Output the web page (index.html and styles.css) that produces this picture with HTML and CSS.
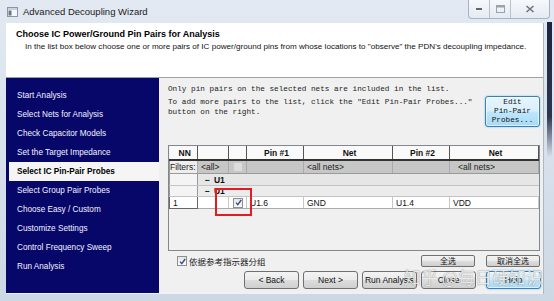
FILE: index.html
```html
<!DOCTYPE html>
<html lang="en">
<head>
    <meta charset="UTF-8">
    <title>Advanced Decoupling Wizard</title>
    <link rel="stylesheet" href="styles.css">
</head>
<body>
    <div class="window">
        <div class="titlebar">
            <svg class="app-icon" width="11" height="10" viewBox="0 0 11 10">
                <rect x="0.5" y="0.5" width="10" height="9" fill="#f4f6f9" stroke="#8a96a6"/>
                <rect x="1" y="1" width="9" height="2" fill="#c9d3df"/>
                <rect x="1.5" y="3.5" width="3" height="5" fill="#6d7784"/>
            </svg>
            <span class="title">Advanced Decoupling Wizard</span>
            <div class="controls">
                <span class="ctl">
                    <svg width="8" height="4" viewBox="0 0 8 4"><rect x="0.5" y="0.5" width="7" height="3" fill="#5d6670" stroke="#f4f4f4"/></svg>
                </span>
                <span class="ctl">
                    <svg width="9" height="8" viewBox="0 0 9 8"><rect x="0.5" y="0.5" width="8" height="7" fill="none" stroke="#9aa3ad"/><rect x="1" y="1" width="7" height="1.5" fill="#9aa3ad"/></svg>
                </span>
                <span class="ctl ctl-close">
                    <svg width="10" height="8" viewBox="0 0 10 8"><path d="M1.5 1 L8.5 7 M8.5 1 L1.5 7" stroke="#6c7580" stroke-width="1.6"/></svg>
                </span>
            </div>
        </div>

        <div class="client">
            <div class="header">
                <h1>Choose IC Power/Ground Pin Pairs for Analysis</h1>
                <p>In the list box below choose one or more pairs of IC power/ground pins from whose locations to "observe" the PDN's decoupling impedance.</p>
            </div>

            <div class="body">
                <ul class="steps">
                    <li>Start Analysis</li>
                    <li>Select Nets for Analysis</li>
                    <li>Check Capacitor Models</li>
                    <li>Set the Target Impedance</li>
                    <li class="current">Select IC Pin-Pair Probes</li>
                    <li>Select Group Pair Probes</li>
                    <li>Choose Easy / Custom</li>
                    <li>Customize Settings</li>
                    <li>Control Frequency Sweep</li>
                    <li>Run Analysis</li>
                </ul>

                <div class="main">
                    <p class="mono note">Only pin pairs on the selected nets are included in the list.</p>
                    <div class="note-row">
                        <p class="mono">To add more pairs to the list, click the "Edit Pin-Pair Probes..."<br>button on the right.</p>
                        <button class="btn btn-focus mono edit-btn">Edit<br>Pin-Pair<br>Probes...</button>
                    </div>

                    <div class="grid-box">
                        <table class="grid">
                            <colgroup>
                                <col style="width:28px">
                                <col style="width:31px">
                                <col style="width:18px">
                                <col style="width:57px">
                                <col style="width:89px">
                                <col style="width:57px">
                                <col style="width:89px">
                            </colgroup>
                            <tr class="head">
                                <th>NN</th><th></th><th></th><th>Pin #1</th><th>Net</th><th>Pin #2</th><th>Net</th>
                            </tr>
                            <tr class="filters">
                                <td class="rowhead">Filters:</td>
                                <td>&lt;all&gt;</td>
                                <td class="cbcell"><span class="cb disabled"></span></td>
                                <td></td>
                                <td>&lt;all nets&gt;</td>
                                <td></td>
                                <td class="pad">&lt;all nets&gt;</td>
                            </tr>
                            <tr class="group">
                                <td class="rowhead"></td>
                                <td colspan="6"><span class="minus">&minus;</span>U1</td>
                            </tr>
                            <tr class="group group-2">
                                <td class="rowhead"></td>
                                <td colspan="6"><span class="minus">&minus;</span>U1</td>
                            </tr>
                            <tr class="data">
                                <td class="rowhead">1</td>
                                <td></td>
                                <td class="cbcell">
                                    <span class="cb"><svg width="7" height="7" viewBox="0 0 7 7"><path d="M1 3.6 L2.8 5.6 L6.2 1" stroke="#2f4f8f" stroke-width="1.4" fill="none"/></svg></span>
                                </td>
                                <td>U1.6</td>
                                <td>GND</td>
                                <td>U1.4</td>
                                <td>VDD</td>
                            </tr>
                        </table>
                        <span class="callout"></span>
                    </div>

                    <div class="grid-actions">
                        <label class="check">
                            <span class="cb"><svg width="7" height="7" viewBox="0 0 7 7"><path d="M1 3.6 L2.8 5.6 L6.2 1" stroke="#2f4f8f" stroke-width="1.4" fill="none"/></svg></span>
                            依据参考指示器分组
                        </label>
                        <button class="btn btn-small">全选</button>
                        <button class="btn btn-small">取消全选</button>
                    </div>

                    <div class="wizard-buttons">
                        <button class="btn">&lt; Back</button>
                        <button class="btn">Next &gt;</button>
                        <button class="btn">Run Analysis</button>
                        <button class="btn">Close</button>
                        <button class="btn btn-focus btn-help">Help</button>
                    </div>
                </div>
            </div>
        </div>

        <div class="watermark">知乎 @每日硬知识</div>
    </div>
</body>
</html>
```

FILE: styles.css
```css
body {
    margin: 0;
    font-family: "Liberation Sans", Arial, sans-serif;
    background-color: #d3dde9;
}

.window {
    position: relative;
    width: 554px;
    height: 301px;
    background: linear-gradient(#e2e9f2, #cdd8e5);
    overflow: hidden;
}

/* dark desktop showing through the right glass edge */
.window::after {
    content: "";
    position: absolute;
    right: 2px;
    top: 22px;
    width: 5px;
    height: 135px;
    background: linear-gradient(#1b2440, #2c3652 70%, rgba(44, 54, 82, 0));
}

.titlebar {
    display: flex;
    align-items: center;
    height: 23px;
    padding-left: 7px;
    box-sizing: border-box;
}

.app-icon {
    margin-right: 5px;
}

.title {
    font-size: 9.5px;
    color: #1a1a1a;
}

.controls {
    display: flex;
    align-self: flex-start;
    margin-left: auto;
    margin-right: 4px;
    height: 18px;
    border: 1px solid #a9b4c2;
    border-top: none;
    border-radius: 0 0 4px 4px;
    background: linear-gradient(rgba(255, 255, 255, 0.7), rgba(230, 236, 243, 0.6));
}

.ctl {
    display: flex;
    align-items: center;
    justify-content: center;
    width: 20px;
    border-right: 1px solid #b8c2ce;
}

.ctl-close {
    width: 38px;
    border-right: none;
}

.client {
    margin-left: 6px;
    width: 537px;
    height: 271px;
    background-color: #f0f0f0;
    border-right: 1px solid #b0b6be;
}

.header {
    height: 55px;
    padding: 6px 0 0 10px;
    box-sizing: border-box;
    background-color: #ffffff;
    border-bottom: 1px solid #a0a0a0;
}

.header h1 {
    margin: 0;
    font-size: 9px;
    line-height: 11px;
    font-weight: bold;
    color: #000;
}

.header p {
    margin: 1px 0 0 9px;
    font-size: 8.1px;
    line-height: 11px;
    white-space: nowrap;
    color: #111;
}

.body {
    display: flex;
    height: 215px;
}

.steps {
    width: 153px;
    margin: 0;
    padding: 8px 0 0 0;
    list-style: none;
    background-color: #07076a;
    box-sizing: border-box;
}

.steps li {
    height: 19px;
    line-height: 19px;
    padding-left: 11px;
    font-size: 8.2px;
    color: #f2f2ff;
}

.steps li.current {
    margin-left: 3px;
    padding-left: 8px;
    background-color: #f5f5f5;
    color: #000;
    font-weight: bold;
}

.main {
    flex: 1;
    padding: 0 2px 0 9px;
}

.mono {
    font-family: "Liberation Mono", "Courier New", monospace;
    font-size: 7.7px;
    line-height: 10px;
    color: #222;
}

.note {
    margin: 6px 0 0 0;
}

.note-row {
    display: flex;
    justify-content: space-between;
    margin-top: 2px;
}

.note-row p {
    margin: 0;
    padding-top: 1px;
}

.btn {
    height: 18px;
    width: 55px;
    padding: 0;
    font-family: "Liberation Sans", Arial, sans-serif;
    font-size: 8.5px;
    color: #111;
    border: 1px solid #707070;
    border-radius: 3px;
    background: linear-gradient(#f3f3f3, #ebebeb 48%, #dddddd 52%, #cfcfcf);
}

.btn-focus {
    border-color: #3c7fb1;
    background: linear-gradient(#e8f5fd, #d9effc 48%, #bee6fd 52%, #a7d9f5);
    box-shadow: inset 0 0 0 1px rgba(255, 255, 255, 0.6), 0 0 2px #62c2f4;
}

.edit-btn {
    width: 55px;
    height: 31px;
    margin-right: 1px;
    font-family: "Liberation Mono", "Courier New", monospace;
    font-size: 7.7px;
    line-height: 9px;
}

.grid-box {
    position: relative;
    margin-top: 18px;
    width: 372px;
    height: 106px;
    box-sizing: border-box;
    border: 1px solid #828790;
    background-color: #f0f0f0;
}

.grid {
    width: 369px;
    table-layout: fixed;
    border-collapse: collapse;
    font-size: 8.5px;
    color: #111;
}

.grid td, .grid th {
    padding: 0 0 0 3px;
    white-space: nowrap;
    overflow: hidden;
}

.grid .head th {
    height: 13px;
    text-align: center;
    font-weight: bold;
    background-color: #fafafa;
    border-right: 1px solid #555;
    border-bottom: 2px solid #333;
}

.grid .filters td {
    height: 12px;
    background-color: #c6c6c6;
    border-right: 1px solid #aaa;
    border-bottom: 1px solid #9a9a9a;
    color: #222;
}

.grid .filters td.pad {
    padding-left: 8px;
}

.grid .rowhead {
    background-color: #eeeeee;
    border: 1px solid #999;
    padding-left: 1px;
}

.grid .filters td.rowhead {
    background-color: #eeeeee;
    padding-left: 0;
}

.grid .group td {
    height: 11px;
    background-color: #e6e6e6;
    border-bottom: 1px solid #c4c4c4;
    font-weight: bold;
    padding-left: 7px;
}

.grid .group-2 td {
    height: 10px;
    background-color: #ececec;
}

.grid .group td.rowhead {
    background-color: #f4f4f4;
    padding-left: 1px;
}

.minus {
    margin-right: 4px;
}

.grid .data td {
    height: 11px;
    background-color: #ffffff;
    border-right: 1px solid #c8c8c8;
    border-bottom: 1px solid #aaa;
}

.grid .data td.rowhead {
    border: 1px solid #666;
    padding-left: 3px;
}

.grid .cbcell {
    padding-left: 4px;
}

.cb {
    display: inline-flex;
    align-items: center;
    justify-content: center;
    width: 8px;
    height: 8px;
    border: 1px solid #8e8f8f;
    background: linear-gradient(#e6e6e6, #fbfbfb);
    vertical-align: middle;
}

.cb.disabled {
    border-color: #c8c8c8;
    background: #dcdcdc;
}

.callout {
    position: absolute;
    left: 46px;
    top: 42px;
    width: 33px;
    height: 24px;
    border: 2px solid #e31b23;
}

.grid-actions {
    display: flex;
    align-items: center;
    gap: 10px;
    margin-top: 4px;
    height: 12px;
}

.check {
    display: flex;
    align-items: center;
    gap: 2px;
    margin-left: 9px;
    margin-right: auto;
    font-family: "Noto Sans CJK SC", sans-serif;
    font-size: 8.5px;
    color: #222;
}

.btn-small {
    width: 54px;
    height: 12px;
    margin-right: 1px;
    font-family: "Noto Sans CJK SC", sans-serif;
    font-size: 8px;
    line-height: 10px;
    border-radius: 2px;
}

.wizard-buttons {
    display: flex;
    justify-content: flex-end;
    gap: 4px;
    margin-top: 4px;
}

.btn-help {
    margin-left: 6px;
}

.watermark {
    position: absolute;
    left: 404px;
    top: 264px;
    font-family: "Noto Sans CJK SC", sans-serif;
    font-size: 17px;
    color: rgba(255, 255, 255, 0.85);
    text-shadow: 0 0 1px rgba(0, 0, 0, 0.55);
    white-space: nowrap;
}
```
